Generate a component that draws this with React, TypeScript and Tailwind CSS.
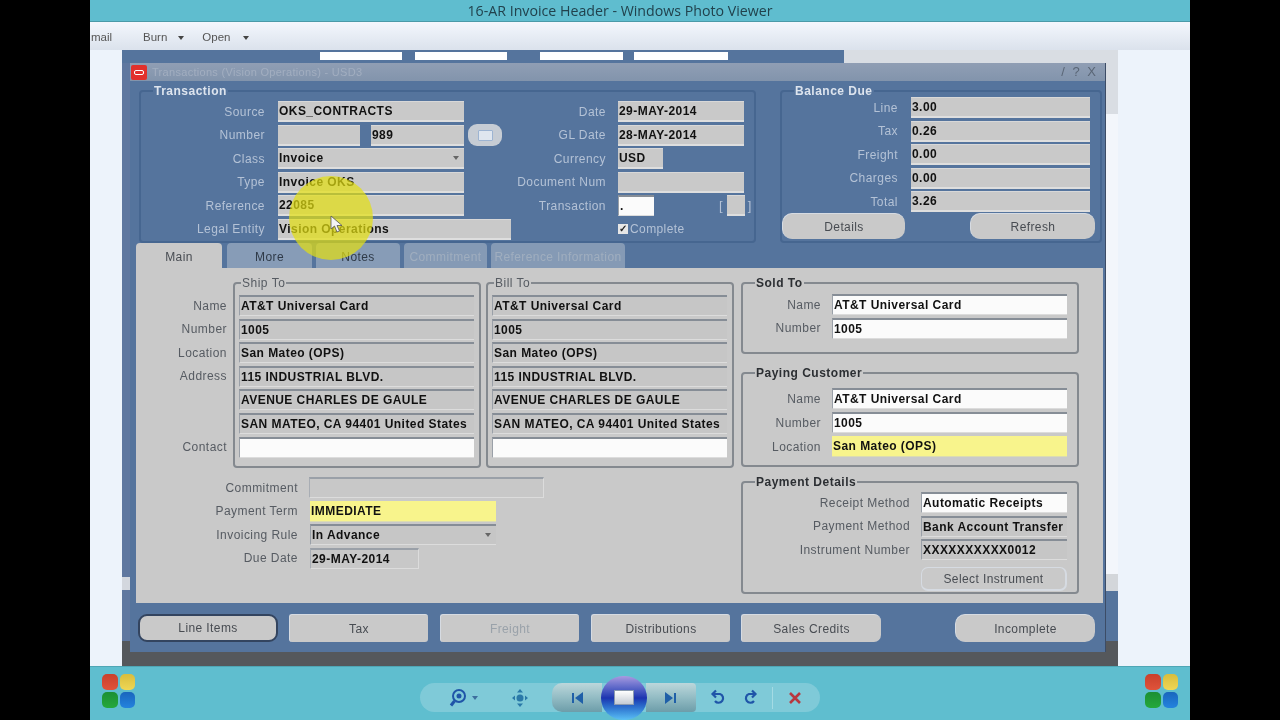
import type { ReactNode } from "react";

type FieldKind = "grey" | "white" | "yellow" | "top" | "disabled";

const fieldStyles: Record<FieldKind, string> = {
  grey: "bg-[#c6c6c6] border-t-2 border-l border-b border-t-[#868d96] border-l-[#9aa0a8] border-b-[#dcdcdc]",
  white: "bg-[#fbfbfb] border-t-2 border-l border-b border-t-[#868d96] border-l-[#9aa0a8] border-b-[#dcdcdc]",
  yellow: "bg-[#f8f48c] border-b border-b-[#dcdcb0]",
  top: "bg-[#c9c9c9] border-b-2 border-t border-b-[#dedede] border-t-[#d8d8d8]",
  disabled: "bg-[#c8c8c8] border-t-2 border-l border-r border-b border-t-[#9aa0a8] border-l-[#a8adb4] border-r-[#dcdcdc] border-b-[#dcdcdc]",
};

const Field = ({ value, w, kind = "grey", combo }: { value?: string; w: string; kind?: FieldKind; combo?: boolean }) => (
  <div className={`flex h-[21px] shrink-0 items-center overflow-hidden whitespace-nowrap pl-[1px] pr-[5px] text-[12px] font-bold tracking-[0.45px] text-[#111] ${w} ${fieldStyles[kind]}`}>
    <span className="flex-1">{value}</span>
    {combo && <span className="h-0 w-0 border-x-[3px] border-t-[4px] border-x-transparent border-t-[#666]"></span>}
  </div>
);

const Label = ({ text, w, light }: { text?: string; w: string; light?: boolean }) => (
  <div className={`shrink-0 whitespace-nowrap text-right text-[12px] tracking-[0.45px] ${w} ${light ? "text-[#b4c2d6]" : "text-[#565b62]"}`}>{text}</div>
);

const Row = ({ children }: { children: ReactNode }) => <div className="flex h-[21px] items-center">{children}</div>;

const GroupBox = ({ title, className, bold, light, children, titleLeft = "left-[12px]" }: { title: string; className: string; bold?: boolean; light?: boolean; children: ReactNode; titleLeft?: string }) => (
  <div className={`relative shrink-0 rounded-[4px] border-2 ${light ? "border-[#466690]" : "border-[#84898f]"} ${className}`}>
    <span className={`absolute top-[-8px] whitespace-nowrap px-[1px] text-[12px] leading-[14px] tracking-[0.5px] ${titleLeft} ${light ? "top-[-7px] bg-[#55749d] font-bold text-[#dde4ee]" : bold ? "bg-[#c9c9c9] font-bold text-[#2c2f33]" : "bg-[#c9c9c9] text-[#565b62]"}`}>{title}</span>
    {children}
  </div>
);

const FormButton = ({ text, w, focused, disabled, className = "" }: { text: string; w: string; focused?: boolean; disabled?: boolean; className?: string }) => (
  <div className={`flex shrink-0 items-center justify-center rounded-[3px] bg-[#c9c9c9] text-[12px] tracking-[0.4px] ${w} ${disabled ? "text-[#9aa2aa]" : "text-[#484c52]"} ${focused ? "rounded-[9px] border-2 border-[#33445f]" : "border-l border-t border-[#d6dbe2]"} ${className}`}>{text}</div>
);

const Tab = ({ text, w, active, disabled }: { text: string; w: string; active?: boolean; disabled?: boolean }) => (
  <div className={`flex shrink-0 items-center justify-center rounded-t-[4px] pt-[2px] text-[12px] tracking-[0.4px] ${w} ${active ? "bg-[#c9c9c9] text-[#484c52]" : disabled ? "bg-[#859ab5] text-[#a0aebf]" : "bg-[#879cb7] text-[#2f3a48]"}`}>{text}</div>
);

const Logo = () => (
  <div className="grid h-[34px] w-[33px] shrink-0 grid-cols-2 gap-[2px]">
    <div className="rounded-[5px] bg-gradient-to-b from-[#c9402c] to-[#e0533a]"></div>
    <div className="rounded-[5px] bg-gradient-to-b from-[#d9bd3c] to-[#efd755]"></div>
    <div className="rounded-[5px] bg-gradient-to-b from-[#1c8f34] to-[#25a83c]"></div>
    <div className="rounded-[5px] bg-gradient-to-b from-[#1a66bd] to-[#2483de]"></div>
  </div>
);

const StackCol = ({ labels, w }: { labels: string[]; w: string }) => (
  <div className="flex flex-col gap-[2.6px] pt-[13px]">
    {labels.map((l, i) => (
      <Row key={i}><Label text={l} w={w} /></Row>
    ))}
  </div>
);

const addressRows = ["AT&T Universal Card", "1005", "San Mateo (OPS)", "115 INDUSTRIAL BLVD.", "AVENUE CHARLES DE GAULE", "SAN MATEO, CA 94401 United States"];

const AddressBox = ({ title, className }: { title: string; className: string }) => (
  <GroupBox title={title} className={`h-[186px] w-[248px] ${className}`} titleLeft="left-[6px]">
    <div className="flex flex-col gap-[2.6px] pl-[4px] pt-[11px]">
      {addressRows.map((v) => (
        <Field key={v} value={v} w="w-[235px]" />
      ))}
      <Field w="w-[235px]" kind="white" />
    </div>
  </GroupBox>
);

export default function App() {
  return (
    <div className="flex h-[720px] w-[1280px] justify-center overflow-hidden bg-black font-['Liberation_Sans',sans-serif]">
      <div className="flex w-[1100px] flex-col blur-[0.55px]">
        {/* Photo Viewer chrome */}
        <div className="flex h-[22px] shrink-0 items-center justify-center border-b border-[#4a9aa8] bg-[#5fbdcf] pr-[40px] font-['Open_Sans',sans-serif] text-[14.2px] text-[#21424d]">
          16-AR Invoice Header - Windows Photo Viewer
        </div>
        <div className="flex h-[28px] shrink-0 items-center bg-gradient-to-b from-[#f3f7fd] to-[#dbe2ec] pl-[1px] pt-[3px] text-[11.5px] text-[#555]">
          <span className="w-[52px]">mail</span>
          <span>Burn</span>
          <span className="ml-[11px] h-0 w-0 border-x-[3px] border-t-[4px] border-x-transparent border-t-[#444]"></span>
          <span className="ml-[18px]">Open</span>
          <span className="ml-[13px] h-0 w-0 border-x-[3px] border-t-[4px] border-x-transparent border-t-[#444]"></span>
        </div>

        {/* Photo area */}
        <div className="h-[616px] shrink-0 bg-[#edf3fb] pl-[32px]">
          <div className="flex h-full w-[996px] flex-col">
            <div className="flex h-[13px] shrink-0 bg-[#d9dde3]">
              <div className="flex h-full w-[722px] items-start bg-[#55749d] pl-[198px] pt-[2px]">
                <div className="h-[8px] w-[82px] bg-white"></div>
                <div className="ml-[13px] h-[8px] w-[92px] bg-white"></div>
                <div className="ml-[33px] h-[8px] w-[83px] bg-white"></div>
                <div className="ml-[11px] h-[8px] w-[94px] bg-white"></div>
              </div>
            </div>

            <div className="flex h-[589px] shrink-0">
              <div className="flex w-[8px] shrink-0 flex-col bg-[#5f779f]">
                <div className="h-[514px]"></div>
                <div className="h-[13px] bg-[#d3d7de]"></div>
                <div className="h-[51px]"></div>
                <div className="flex-1 bg-[#55585c]"></div>
              </div>

              {/* Oracle Forms window */}
              <div className="relative flex w-[976px] shrink-0 flex-col border-r border-[#3c4c66] bg-[#55749d]">
                <div className="flex h-[18px] shrink-0 items-center bg-gradient-to-b from-[#909eb4] to-[#8294ac] pl-[1px] pr-[7px]">
                  <div className="flex h-[15px] w-[16px] items-center justify-center rounded-[2px] bg-[#e2302c]">
                    <div className="h-[5px] w-[10px] rounded-[2px] border border-white"></div>
                  </div>
                  <span className="ml-[5px] flex-1 text-[11px] tracking-[0.3px] text-[#a2aec0]">Transactions (Vision Operations) - USD3</span>
                  <span className="text-[13px] tracking-[2px] text-[#5a6676]">/ ? X</span>
                </div>

                <div className="mt-[9px] flex shrink-0 pl-[9px]">
                  {/* Transaction */}
                  <GroupBox title="Transaction" light className="h-[153px] w-[617px]" titleLeft="left-[12px]">
                    <div className="flex pt-[9px]">
                      <div className="flex w-[370px] shrink-0 flex-col gap-[2.6px]">
                        <Row><Label text="Source" w="w-[124px]" light /><div className="w-[13px]"></div><Field value="OKS_CONTRACTS" w="w-[186px]" kind="top" /></Row>
                        <Row>
                          <Label text="Number" w="w-[124px]" light /><div className="w-[13px]"></div>
                          <Field w="w-[82px]" kind="top" />
                          <div className="w-[11px]"></div>
                          <Field value="989" w="w-[93px]" kind="top" />
                          <div className="ml-[4px] flex h-[22px] w-[34px] items-center justify-center rounded-[9px] bg-[#c6ccd4]">
                            <div className="h-[11px] w-[15px] rounded-[1px] border border-[#9db4d2] bg-[#dfe6ef]"></div>
                          </div>
                        </Row>
                        <Row><Label text="Class" w="w-[124px]" light /><div className="w-[13px]"></div><Field value="Invoice" w="w-[186px]" kind="top" combo /></Row>
                        <Row><Label text="Type" w="w-[124px]" light /><div className="w-[13px]"></div><Field value="Invoice OKS" w="w-[186px]" kind="top" /></Row>
                        <Row><Label text="Reference" w="w-[124px]" light /><div className="w-[13px]"></div><Field value="22085" w="w-[186px]" kind="top" /></Row>
                        <Row><Label text="Legal Entity" w="w-[124px]" light /><div className="w-[13px]"></div><Field value="Vision Operations" w="w-[233px]" kind="top" /></Row>
                      </div>
                      <div className="flex flex-col gap-[2.6px]">
                        <Row><Label text="Date" w="w-[95px]" light /><div className="w-[12px]"></div><Field value="29-MAY-2014" w="w-[126px]" kind="top" /></Row>
                        <Row><Label text="GL Date" w="w-[95px]" light /><div className="w-[12px]"></div><Field value="28-MAY-2014" w="w-[126px]" kind="top" /></Row>
                        <Row><Label text="Currency" w="w-[95px]" light /><div className="w-[12px]"></div><Field value="USD" w="w-[45px]" kind="top" /></Row>
                        <Row><Label text="Document Num" w="w-[95px]" light /><div className="w-[12px]"></div><Field w="w-[126px]" kind="top" /></Row>
                        <Row>
                          <Label text="Transaction" w="w-[95px]" light /><div className="w-[12px]"></div>
                          <Field value="." w="w-[36px]" kind="white" />
                          <span className="ml-[65px] text-[13px] text-[#b4c2d6]">[</span>
                          <Field w="ml-[4px] w-[18px]" kind="top" />
                          <span className="ml-[3px] text-[13px] text-[#b4c2d6]">]</span>
                        </Row>
                        <Row>
                          <div className="w-[107px]"></div>
                          <div className="flex h-[10px] w-[10px] items-center justify-center bg-[#e6e6e6] text-[10px] font-bold leading-none text-[#222]">✓</div>
                          <span className="ml-[2px] text-[12px] tracking-[0.4px] text-[#b4c2d6]">Complete</span>
                        </Row>
                      </div>
                    </div>
                  </GroupBox>

                  {/* Balance Due */}
                  <GroupBox title="Balance Due" light className="ml-[24px] h-[153px] w-[322px]" titleLeft="left-[12px]">
                    <div className="flex flex-col gap-[2.6px] pt-[5px]">
                      {[["Line", "3.00"], ["Tax", "0.26"], ["Freight", "0.00"], ["Charges", "0.00"], ["Total", "3.26"]].map(([l, v]) => (
                        <Row key={l}><Label text={l} w="w-[116px]" light /><div className="w-[13px]"></div><Field value={v} w="w-[179px]" kind="top" /></Row>
                      ))}
                    </div>
                    <div className="mt-[1px] flex h-[26px]">
                      <FormButton text="Details" w="w-[123px]" className="rounded-[10px] border-0" />
                      <FormButton text="Refresh" w="ml-[65px] w-[125px]" className="rounded-[10px] border-0" />
                    </div>
                  </GroupBox>
                </div>

                {/* Tabs */}
                <div className="flex h-[25px] shrink-0 pl-[6px]">
                  <Tab text="Main" w="w-[86px]" active />
                  <div className="w-[5px]"></div>
                  <Tab text="More" w="w-[85px]" />
                  <div className="w-[4px]"></div>
                  <Tab text="Notes" w="w-[84px]" />
                  <div className="w-[4px]"></div>
                  <Tab text="Commitment" w="w-[83px]" disabled />
                  <div className="w-[4px]"></div>
                  <Tab text="Reference Information" w="w-[134px]" disabled />
                </div>

                <div className="ml-[6px] flex h-[335px] w-[967px] shrink-0 bg-[#c9c9c9] pt-[14px]">
                  <div className="w-[598px] shrink-0">
                    <div className="flex">
                      <StackCol w="w-[91px]" labels={["Name", "Number", "Location", "Address", "", "", "Contact"]} />
                      <AddressBox title="Ship To" className="ml-[6px]" />
                      <AddressBox title="Bill To" className="ml-[5px]" />
                    </div>
                    <div className="mt-[9px] flex flex-col gap-[2.6px]">
                      <Row><Label text="Commitment" w="w-[162px]" /><div className="w-[11px]"></div><Field w="w-[235px]" kind="disabled" /></Row>
                      <Row><Label text="Payment Term" w="w-[162px]" /><div className="w-[12px]"></div><Field value="IMMEDIATE" w="w-[186px]" kind="yellow" /></Row>
                      <Row><Label text="Invoicing Rule" w="w-[162px]" /><div className="w-[12px]"></div><Field value="In Advance" w="w-[186px]" combo /></Row>
                      <Row><Label text="Due Date" w="w-[162px]" /><div className="w-[12px]"></div><Field value="29-MAY-2014" w="w-[109px]" kind="disabled" /></Row>
                    </div>
                  </div>

                  <div className="ml-[7px] flex flex-col">
                    <GroupBox title="Sold To" bold className="h-[72px] w-[338px]">
                      <div className="flex flex-col gap-[2.6px] pt-[10px]">
                        <Row><Label text="Name" w="w-[78px]" /><div className="w-[11px]"></div><Field value="AT&T Universal Card" w="w-[235px]" kind="white" /></Row>
                        <Row><Label text="Number" w="w-[78px]" /><div className="w-[11px]"></div><Field value="1005" w="w-[235px]" kind="white" /></Row>
                      </div>
                    </GroupBox>
                    <GroupBox title="Paying Customer" bold className="mt-[18px] h-[95px] w-[338px]">
                      <div className="flex flex-col gap-[3px] pt-[14px]">
                        <Row><Label text="Name" w="w-[78px]" /><div className="w-[11px]"></div><Field value="AT&T Universal Card" w="w-[235px]" kind="white" /></Row>
                        <Row><Label text="Number" w="w-[78px]" /><div className="w-[11px]"></div><Field value="1005" w="w-[235px]" kind="white" /></Row>
                        <Row><Label text="Location" w="w-[78px]" /><div className="w-[11px]"></div><Field value="San Mateo (OPS)" w="w-[235px]" kind="yellow" /></Row>
                      </div>
                    </GroupBox>
                    <GroupBox title="Payment Details" bold className="mt-[14px] h-[113px] w-[338px]">
                      <div className="flex flex-col gap-[2.6px] pt-[9px]">
                        <Row><Label text="Receipt Method" w="w-[167px]" /><div className="w-[11px]"></div><Field value="Automatic Receipts" w="w-[146px]" kind="white" /></Row>
                        <Row><Label text="Payment Method" w="w-[167px]" /><div className="w-[11px]"></div><Field value="Bank Account Transfer" w="w-[146px]" /></Row>
                        <Row><Label text="Instrument Number" w="w-[167px]" /><div className="w-[11px]"></div><Field value="XXXXXXXXXX0012" w="w-[146px]" /></Row>
                      </div>
                      <div className="ml-[178px] mt-[7px] flex h-[24px]">
                        <FormButton text="Select Instrument" w="w-[146px]" className="rounded-[7px] border-0 border-b-2 border-r-2 border-[#b5b8bc]" />
                      </div>
                    </GroupBox>
                  </div>
                </div>

                {/* Bottom buttons */}
                <div className="mt-[11px] flex h-[28px] shrink-0 pl-[8px]">
                  <FormButton text="Line Items" w="w-[140px]" focused />
                  <FormButton text="Tax" w="ml-[11px] w-[139px]" />
                  <FormButton text="Freight" w="ml-[12px] w-[139px]" disabled />
                  <FormButton text="Distributions" w="ml-[12px] w-[139px]" />
                  <FormButton text="Sales Credits" w="ml-[11px] w-[140px]" className="rounded-r-[7px]" />
                  <FormButton text="Incomplete" w="ml-[74px] w-[140px]" className="rounded-[10px]" />
                </div>

                {/* Mouse highlight */}
                <div className="absolute left-[159px] top-[113px] h-[84px] w-[84px] rounded-full bg-[#e4e010]/70"></div>
                <svg className="absolute left-[200px] top-[152px]" width="13" height="18" viewBox="0 0 13 18">
                  <path d="M1 1v13l3.5-3 2.5 6 2.5-1-2.5-5.5H12z" fill="#f4f4f4" stroke="#555" strokeWidth="0.8" />
                </svg>
              </div>

              <div className="flex w-[12px] shrink-0 flex-col bg-[#55749d]">
                <div className="h-[51px] bg-[#d9dde3]"></div>
                <div className="h-[460px] bg-[#f3f6fb]"></div>
                <div className="h-[17px] bg-[#d3d6da]"></div>
                <div className="h-[50px]"></div>
                <div className="flex-1 bg-[#55585c]"></div>
              </div>
            </div>

            <div className="flex-1 bg-[#55585c]"></div>
          </div>
        </div>

        {/* Viewer controls */}
        <div className="flex h-[54px] shrink-0 items-start border-t border-[#4fa6b5] bg-[#5fbecf] pl-[12px]">
          <div className="mt-[7px]"><Logo /></div>
          <div className="ml-[285px] mt-[16px] flex h-[29px] w-[400px] shrink-0 items-center rounded-full bg-[#7fcad8]">
            <svg className="ml-[29px]" width="18" height="20" viewBox="0 0 18 20" fill="none" stroke="#1f55a8" strokeWidth="2">
              <circle cx="10" cy="8" r="6" />
              <circle cx="10" cy="8" r="1.5" fill="#1f55a8" />
              <path d="M5.5 13L2 17.5" strokeWidth="3" />
            </svg>
            <span className="ml-[5px] h-0 w-0 border-x-[3px] border-t-[4px] border-x-transparent border-t-[#3d6f9e]"></span>
            <svg className="ml-[33px]" width="18" height="20" viewBox="0 0 18 20" fill="#2a79a8">
              <circle cx="9" cy="10" r="3.5" />
              <path d="M9 1l3 3.5H6zM9 19l-3-3.5h6zM1 10l3-2.5v5zM17 10l-3 2.5v-5z" />
            </svg>
            <div className="ml-[23px] flex h-[29px] w-[50px] shrink-0 items-center justify-center rounded-l-[10px] bg-gradient-to-b from-[#bcd7db] via-[#93bcc4] to-[#6d9da9]">
              <svg width="14" height="12" viewBox="0 0 14 12" fill="#1f5fa8"><path d="M2 1h2v10H2zM13 0v12L5 6z" /></svg>
            </div>
            <div className="z-10 mx-[-1px] flex h-[44px] w-[46px] shrink-0 items-center justify-center rounded-full bg-gradient-to-b from-[#a99ae0] via-[#1d33b0] to-[#5cc0f5]">
              <div className="h-[15px] w-[20px] border border-[#8a9ab0] bg-gradient-to-b from-white to-[#c4cbd4]"></div>
            </div>
            <div className="flex h-[29px] w-[50px] shrink-0 items-center justify-center rounded-r-[4px] bg-gradient-to-b from-[#bcd7db] via-[#93bcc4] to-[#6d9da9]">
              <svg width="14" height="12" viewBox="0 0 14 12" fill="#1f5fa8"><path d="M10 1h2v10h-2zM1 0v12l8-6z" /></svg>
            </div>
            <svg className="ml-[13px]" width="18" height="18" viewBox="0 0 18 18" fill="none" stroke="#1f55a8" strokeWidth="2.2">
              <path d="M5 5h6a4.5 4.5 0 1 1-5 7" />
              <path d="M7 1.5L3.5 5 7 8.5" />
            </svg>
            <svg className="ml-[14px]" width="18" height="18" viewBox="0 0 18 18" fill="none" stroke="#1f55a8" strokeWidth="2.2">
              <path d="M13 5H8a4.5 4.5 0 1 0 5 7" />
              <path d="M11 1.5L14.5 5 11 8.5" />
            </svg>
            <div className="ml-[13px] h-[22px] w-px bg-[#a4dbe4]"></div>
            <svg className="ml-[15px]" width="14" height="14" viewBox="0 0 14 14" fill="none" stroke="#b8383f" strokeWidth="2.6">
              <path d="M2 2l10 10M12 2L2 12" />
            </svg>
          </div>
          <div className="ml-[325px] mt-[7px]"><Logo /></div>
        </div>
      </div>
    </div>
  );
}
